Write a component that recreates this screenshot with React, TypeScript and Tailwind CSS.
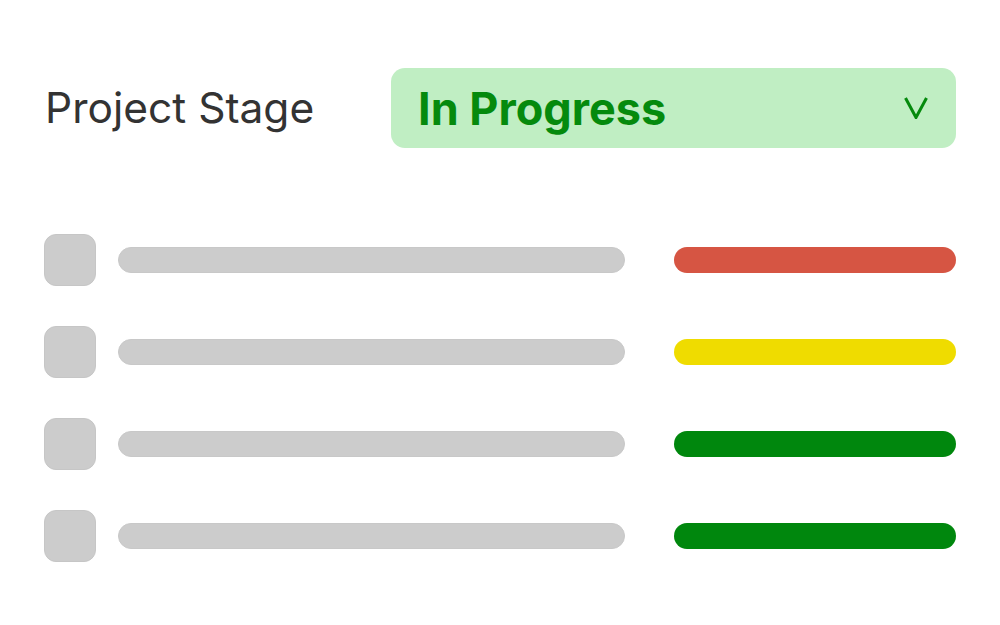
import React from "react";

const rows = ["bg-[#d65543]", "bg-[#efdc00]", "bg-[#00870d]", "bg-[#00870d]"];

export default function App() {
  return (
    <div className="w-[1000px] h-[625px] bg-white px-[44px] pt-[68px]" style={{ fontFamily: "Inter, 'Noto Sans', sans-serif" }}>
      <div className="flex items-center h-[80px]">
        <div className="pl-[1px] text-[42.5px] leading-none text-[#333333]">Project Stage</div>
        <div className="ml-auto w-[565px] h-[80px] rounded-[14px] bg-[#c0eec3] flex items-center pl-[27px] pr-[28px]">
          <span className="text-[45px] font-bold leading-none text-[#058a0d]">In Progress</span>
          <svg className="ml-auto" width="24" height="22" viewBox="0 0 24 22">
            <polyline points="1.5,1 12,20.5 22.5,1" fill="none" stroke="#058a0d" strokeWidth="3" />
          </svg>
        </div>
      </div>
      <div className="mt-[86px] flex flex-col gap-[40px]">
        {rows.map((c, i) => (
          <div key={i} className="flex items-center h-[52px]">
            <div className="w-[52px] h-[52px] rounded-[12px] bg-[#cccccc] border border-[#c6c6c6]" />
            <div className="ml-[22px] w-[507px] h-[26px] rounded-full bg-[#cccccc] border border-[#c8c8c8]" />
            <div className={`ml-[49px] w-[282px] h-[26px] rounded-full ${c}`} />
          </div>
        ))}
      </div>
    </div>
  );
}
